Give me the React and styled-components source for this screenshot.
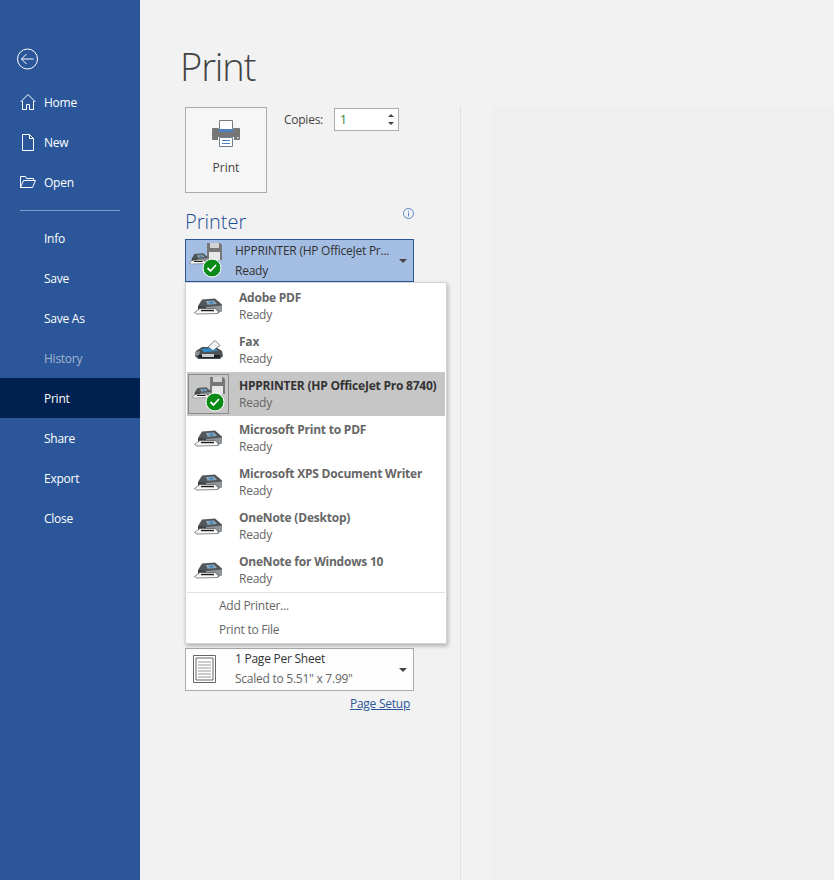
import React from "react";
import styled, { createGlobalStyle } from "styled-components";

const GlobalStyle = createGlobalStyle`
  html, body { margin: 0; padding: 0; }
  body { font-family: "Open Sans", "Noto Sans", "Liberation Sans", sans-serif; background: #f2f2f2; letter-spacing: -0.25px; }
`;

const Page = styled.div`
  width: 834px;
  height: 880px;
  display: flex;
  overflow: hidden;
  background: #f2f2f2;
`;

const Sidebar = styled.nav`
  width: 140px;
  flex: none;
  background: #2b579a;
  padding-top: 39px;
  box-sizing: border-box;
`;

const BackButton = styled.div`
  height: 40px;
  padding-left: 16px;
  margin-bottom: 3px;
  display: flex;
  align-items: center;
`;

const NavList = styled.div`
  display: flex;
  flex-direction: column;
`;

const NavItem = styled.div`
  height: 40px;
  display: flex;
  align-items: center;
  gap: 8px;
  padding-left: ${(p) => (p.$icon ? "20px" : "44px")};
  font-size: 12px;
  color: ${(p) => (p.$disabled ? "#a3b3cf" : "#fff")};
  background: ${(p) => (p.$active ? "#002050" : "transparent")};
`;

const NavIcon = styled.svg`
  width: 16px;
  height: 18px;
  flex: none;
  fill: none;
  stroke: #fff;
  stroke-width: 1;
`;

const NavRule = styled.div`
  height: 1px;
  margin: 8px 20px 7px;
  background: #7f9dc9;
`;

const Main = styled.main`
  flex: 1;
  padding-left: 40px;
  display: flex;
  flex-direction: column;
`;

const Title = styled.h1`
  margin: 0;
  padding: 37px 0 0 0;
  height: 107px;
  box-sizing: border-box;
  font-size: 38px;
  line-height: 58px;
  font-weight: 300;
  letter-spacing: -1.1px;
  color: #444;
`;

const Columns = styled.div`
  flex: 1;
  display: flex;
`;

const Controls = styled.div`
  width: 281px;
  flex: none;
  box-sizing: border-box;
  padding-left: 5px;
  border-right: 1px solid #e1e1e1;
`;

const Preview = styled.div`
  flex: 1;
  margin: 1px 0 0 31px;
  background: #efefef;
`;

const TopRow = styled.div`
  display: flex;
  align-items: flex-start;
  gap: 17px;
`;

const PrintButton = styled.button`
  width: 82px;
  height: 86px;
  box-sizing: border-box;
  border: 1px solid #ababab;
  background: #f6f6f6;
  padding: 12px 0 0;
  display: flex;
  flex-direction: column;
  align-items: center;
  gap: 12px;
  font: inherit;
  font-size: 12px;
  color: #444;
`;

const Copies = styled.label`
  display: flex;
  align-items: center;
  gap: 11px;
  margin-top: 1px;
  font-size: 12px;
  color: #444;
`;

const Spinner = styled.div`
  width: 65px;
  height: 23px;
  box-sizing: border-box;
  border: 1px solid #ababab;
  background: #fff;
  display: flex;
  align-items: center;
  justify-content: space-between;
  padding: 0 4px 0 5px;
  color: #2a7d36;
  font-size: 12px;
`;

const SpinArrows = styled.div`
  display: flex;
  flex-direction: column;
  gap: 5px;
`;

const Tri = styled.span`
  display: block;
  width: 0;
  height: 0;
  border-left: ${(p) => p.$size || 3}px solid transparent;
  border-right: ${(p) => p.$size || 3}px solid transparent;
  ${(p) => (p.$up ? "border-bottom" : "border-top")}: ${(p) => p.$size || 3}px solid #444;
`;

const SectionHead = styled.div`
  display: flex;
  justify-content: space-between;
  align-items: flex-start;
  width: 229px;
  margin-top: 14px;
  height: 32px;
`;

const SectionTitle = styled.h2`
  margin: 0;
  font-size: 20px;
  line-height: 30px;
  font-weight: 300;
  letter-spacing: 0;
  color: #1f4f99;
`;

const InfoBadge = styled.svg`
  width: 11px;
  height: 11px;
  margin-top: 1px;
`;

const Picker = styled.div`
  position: relative;
  width: 229px;
  height: 43px;
  box-sizing: border-box;
  border: 1px solid ${(p) => (p.$open ? "#2b579a" : "#ababab")};
  background: ${(p) => (p.$open ? "#a3bde3" : "#fdfdfd")};
  display: flex;
  align-items: center;
  padding-right: 6px;
`;

const PickerIcon = styled.div`
  width: 49px;
  flex: none;
  box-sizing: border-box;
  padding-left: ${(p) => p.$inset}px;
  padding-bottom: ${(p) => (p.$open ? 2 : 0)}px;
  display: flex;
`;

const PickerText = styled.div`
  flex: 1;
  min-width: 0;
  display: flex;
  flex-direction: column;
  gap: 3px;
  padding-bottom: ${(p) => (p.$open ? 0 : 2)}px;
  font-size: 12px;
  line-height: 17px;
  color: #333;
`;

const PickerSub = styled.span`
  color: ${(p) => (p.$muted ? "#666" : "#333")};
`;

const Spacer = styled.div`
  height: 366px;
`;

const Dropdown = styled.div`
  position: absolute;
  top: 282px;
  left: 185px;
  width: 262px;
  height: 362px;
  box-sizing: border-box;
  background: #fff;
  border: 1px solid #d4d4d4;
  box-shadow: 1px 2px 4px rgba(0, 0, 0, 0.28);
  padding-top: 1px;
  z-index: 2;
`;

const PrinterRow = styled.div`
  height: 44px;
  margin: 0 1px;
  display: flex;
  align-items: center;
  background: ${(p) => (p.$selected ? "#c6c6c6" : "transparent")};
`;

const RowIcon = styled.div`
  width: 41px;
  height: 40px;
  margin-left: 1px;
  margin-right: 10px;
  box-sizing: border-box;
  flex: none;
  display: flex;
  align-items: center;
  justify-content: center;
  border: 1px solid ${(p) => (p.$selected ? "#8a8a8a" : "transparent")};
`;

const RowText = styled.div`
  display: flex;
  flex-direction: column;
  font-size: 12px;
  line-height: 17px;
  padding-bottom: 1px;
`;

const RowName = styled.span`
  font-weight: 700;
  letter-spacing: -0.22px;
  color: ${(p) => (p.$selected ? "#333" : "#666")};
  white-space: nowrap;
`;

const RowStatus = styled.span`
  color: #666;
`;

const MenuRule = styled.div`
  height: 1px;
  background: #e1e1e1;
  margin: 0 1px;
`;

const MenuItem = styled.div`
  height: 24px;
  display: flex;
  align-items: center;
  padding-left: 33px;
  font-size: 12px;
  color: #666;
`;

const SetupLink = styled.a`
  display: block;
  width: 225px;
  margin-top: 4px;
  text-align: right;
  font-size: 12px;
  line-height: 17px;
  color: #2b579a;
  text-decoration: underline;
`;

const PrinterIcon = () => (
  <svg width="30" height="27" viewBox="0 0 30 27">
    <path d="M8.5.5h13v10h-13z" fill="#fff" stroke="#7a7a7a" />
    <path d="M2 8h5.5v1h15V8H28a1 1 0 0 1 1 1v10a1 1 0 0 1-1 1h-5v-3H7v3H2a1 1 0 0 1-1-1V9a1 1 0 0 1 1-1z" fill="#767676" />
    <path d="M7.5 9h15v3h-15z" fill="#4f81bd" />
    <path d="M26 17h1.5v1.5H26z" fill="#ddd" />
    <path d="M8.5 17.5h13v9h-13z" fill="#fff" stroke="#6f7f90" />
    <path d="M11 20.5h8M11 23.5h8" stroke="#4f81bd" />
  </svg>
);

const DevicePrinter = () => (
  <>
    <path d="M8 1.5L21 .5l7 6v6.500l-4 2v-2H8L4 8z" fill="#50575b" />
    <path d="M12 3l8-.5 3 3.500-9.500.8z" fill="#8fa6b4" />
    <path d="M14.500 3.700l4-.2 1.700 2-4.200.3z" fill="#3f87bf" />
    <path d="M12 9l16-1.500V13l-4 2v-3l-12 .5z" fill="#8d9396" />
    <path d="M4 8l8 1v3.500H8L4 12z" fill="#3a3f42" />
    <path d="M.5 14.500L6 10.500h15l3 2.500v2.500L3 16z" fill="#fbfbfb" stroke="#555" strokeWidth=".7" />
    <path d="M7 12.500h13" stroke="#1c1c1c" strokeWidth="1.500" />
  </>
);

const DeviceIcon = () => (
  <svg width="30" height="17" viewBox="0 0 30 17">
    <DevicePrinter />
  </svg>
);

const FaxIcon = () => (
  <svg width="30" height="20" viewBox="0 0 30 20">
    <path d="M2 11l6-4h14l6 4 1 5-3 3H4l-3-3z" fill="#4b5155" />
    <path d="M7 9l13-1 4 3-14 1z" fill="#2f8fd6" />
    <path d="M14 7l7-6.500 5 5-7 5z" fill="#f3f6f8" stroke="#5f666a" strokeWidth=".8" />
    <path d="M4 15h22v3H5z" fill="#1f2325" />
    <path d="M8 14h12v3H8z" fill="#c9cdd0" />
    <path d="M1 12l5-1-1 4-3 1z" fill="#8b9296" />
  </svg>
);

const DefaultPrinterIcon = () => (
  <svg width="34" height="36" viewBox="0 0 34 36">
    <path d="M18 1h13l2 2v15H18z" fill="#777" />
    <path d="M21 1h9v5h-9z" fill="#d2d2d2" />
    <path d="M20 10h11v8H20z" fill="#e8e8e8" />
    <g transform="translate(0 11) scale(.68)">
      <DevicePrinter />
    </g>
    <circle cx="23" cy="26" r="9" fill="#0a8a16" stroke="#fff" strokeWidth="1" />
    <path d="M18.500 26l3 3 5.500-6" fill="none" stroke="#fff" strokeWidth="1.800" />
  </svg>
);

const SheetIcon = () => (
  <svg width="24" height="29" viewBox="0 0 24 29" fill="none" stroke="#666">
    <path d="M.5.5h22v27H.5z" />
    <path d="M3 3h17v22H3z" />
    <path d="M5 7h13M5 10h13M5 13h13M5 16h13M5 19h13M5 22h13" stroke="#9a9a9a" />
  </svg>
);

const navItems = ["Info", "Save", "Save As", "History", "Print", "Share", "Export", "Close"];

const printers = [
  { name: "Adobe PDF", icon: "printer" },
  { name: "Fax", icon: "fax" },
  { name: "HPPRINTER (HP OfficeJet Pro 8740)", icon: "default", selected: true },
  { name: "Microsoft Print to PDF", icon: "printer" },
  { name: "Microsoft XPS Document Writer", icon: "printer" },
  { name: "OneNote (Desktop)", icon: "printer" },
  { name: "OneNote for Windows 10", icon: "printer" },
];

const rowIcons = {
  printer: <DeviceIcon />,
  fax: <FaxIcon />,
  default: <DefaultPrinterIcon />,
};

const App = () => (
  <>
    <GlobalStyle />
    <Page>
      <Sidebar>
        <BackButton>
          <svg width="24" height="24" viewBox="0 0 24 24" fill="none" stroke="#fff" strokeWidth="1">
            <circle cx="11.500" cy="12" r="10" />
            <path d="M5.500 12h12M10.500 7l-5 5 5 5" />
          </svg>
        </BackButton>
        <NavList>
          <NavItem $icon>
            <NavIcon viewBox="0 0 16 18">
              <path d="M.5 9L8 1.500 15.500 9M2.500 8v8.500h4v-5h3v5h4V8" />
            </NavIcon>
            Home
          </NavItem>
          <NavItem $icon>
            <NavIcon viewBox="0 0 16 18">
              <path d="M2.500 1.500h7l4 4v12h-11zM9.500 1.500v4h4" />
            </NavIcon>
            New
          </NavItem>
          <NavItem $icon>
            <NavIcon viewBox="0 0 16 18">
              <path d="M.5 14.500v-11h5l1 2h7v2M.5 14.500l3-7h12l-3 7z" />
            </NavIcon>
            Open
          </NavItem>
          <NavRule />
          {navItems.map((item) => (
            <NavItem key={item} $active={item === "Print"} $disabled={item === "History"}>
              {item}
            </NavItem>
          ))}
        </NavList>
      </Sidebar>
      <Main>
        <Title>Print</Title>
        <Columns>
          <Controls>
            <TopRow>
              <PrintButton>
                <PrinterIcon />
                Print
              </PrintButton>
              <Copies>
                Copies:
                <Spinner>
                  1
                  <SpinArrows>
                    <Tri $up />
                    <Tri />
                  </SpinArrows>
                </Spinner>
              </Copies>
            </TopRow>
            <SectionHead>
              <SectionTitle>Printer</SectionTitle>
              <InfoBadge viewBox="0 0 11 11" fill="none" stroke="#5b87c9">
                <circle cx="5.500" cy="5.500" r="5" />
                <path d="M5.500 4.500V8.500M5.500 2.500v1" />
              </InfoBadge>
            </SectionHead>
            <Picker $open>
              <PickerIcon $inset={3} $open>
                <DefaultPrinterIcon />
              </PickerIcon>
              <PickerText $open>
                <span>HPPRINTER (HP OfficeJet Pr...</span>
                <PickerSub>Ready</PickerSub>
              </PickerText>
              <Tri $size={4} />
            </Picker>
            <Spacer />
            <Picker>
              <PickerIcon $inset={7}>
                <SheetIcon />
              </PickerIcon>
              <PickerText>
                <span>1 Page Per Sheet</span>
                <PickerSub $muted>Scaled to 5.51" x 7.99"</PickerSub>
              </PickerText>
              <Tri $size={4} />
            </Picker>
            <SetupLink>Page Setup</SetupLink>
          </Controls>
          <Preview />
        </Columns>
      </Main>
      <Dropdown>
        {printers.map((p) => (
          <PrinterRow key={p.name} $selected={p.selected}>
            <RowIcon $selected={p.selected}>{rowIcons[p.icon]}</RowIcon>
            <RowText>
              <RowName $selected={p.selected}>{p.name}</RowName>
              <RowStatus>Ready</RowStatus>
            </RowText>
          </PrinterRow>
        ))}
        <MenuRule />
        <MenuItem>Add Printer...</MenuItem>
        <MenuItem>Print to File</MenuItem>
      </Dropdown>
    </Page>
  </>
);

export default App;
